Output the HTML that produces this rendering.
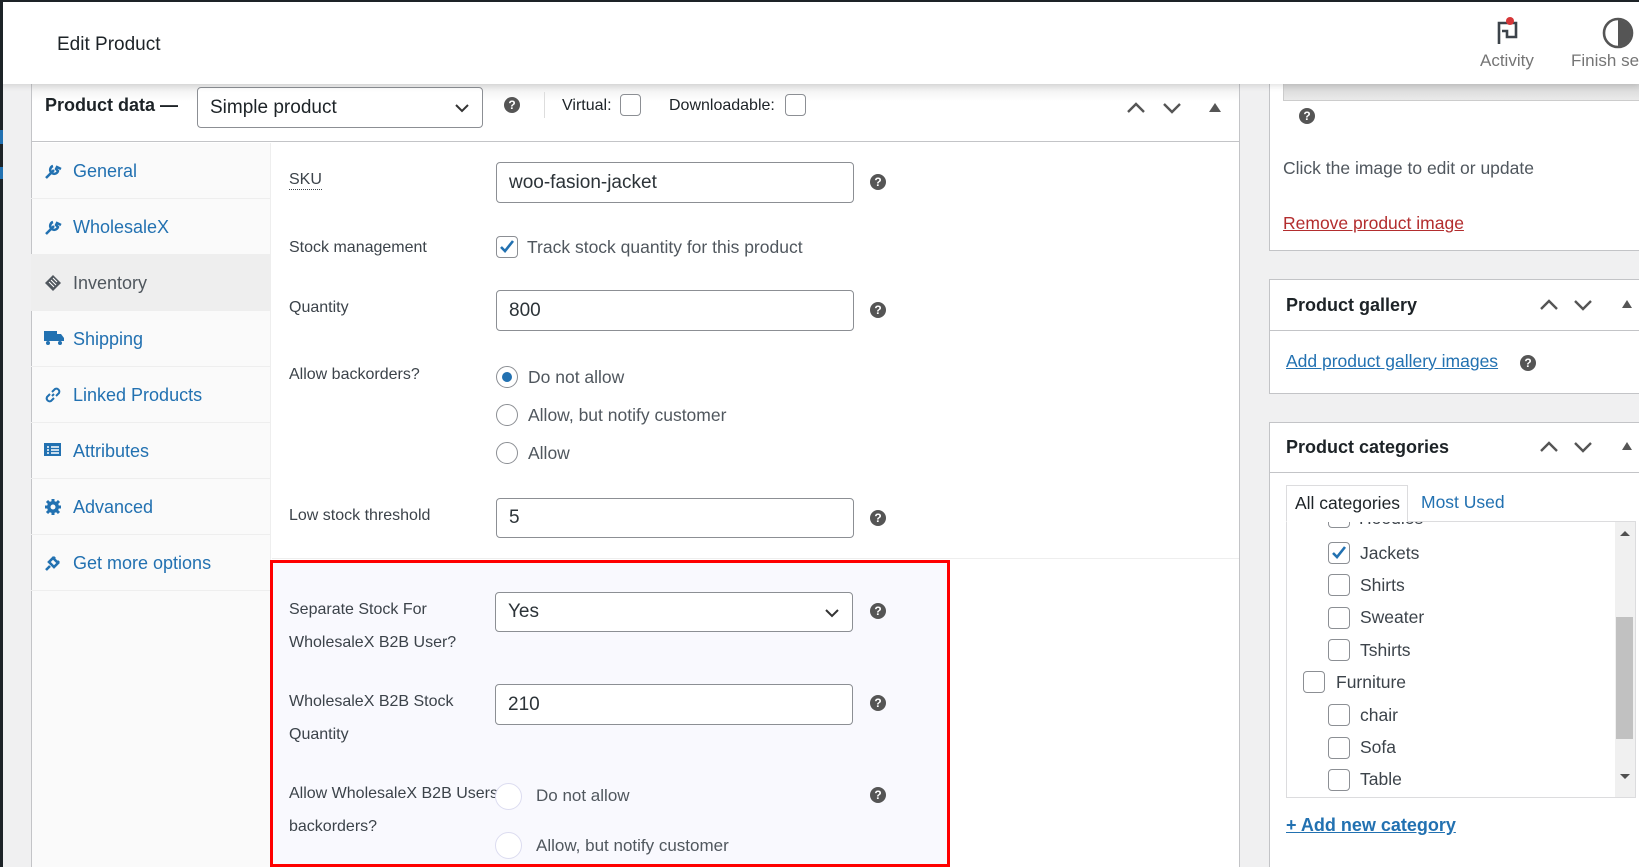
<!DOCTYPE html>
<html><head><meta charset="utf-8"><style>
*{box-sizing:border-box;margin:0;padding:0}
html{width:1639px;height:867px;overflow:hidden}
body{width:1639px;height:867px;overflow:hidden;background:#f0f0f1;font-family:"Liberation Sans",sans-serif;position:relative;color:#3c434a}
.a{position:absolute;white-space:nowrap}
.lbl{font-size:16px;color:#3c434a;line-height:20px}
.inp{position:absolute;background:#fff;border:1px solid #8c8f94;border-radius:4px;font-size:19px;color:#2c3338;padding-left:12px;display:flex;align-items:center}
.q{position:absolute;width:16px;height:16px;border-radius:50%;background:#555;color:#fff;font-size:12px;font-weight:bold;text-align:center;line-height:16px}
.tab{position:absolute;left:31px;width:240px;height:56px;border-bottom:1px solid #eee;font-size:18px;color:#2271b1;line-height:56px;padding-left:42px}
.tab svg{position:absolute;left:13px;top:19px}
.cb{position:absolute;width:22px;height:22px;border:1px solid #8c8f94;border-radius:4px;background:#fff}
.rd{position:absolute;width:22px;height:22px;border:1px solid #8c8f94;border-radius:50%;background:#fff}
.box{position:absolute;background:#fff;border:1px solid #c3c4c7}
.h2{font-size:18px;font-weight:bold;color:#1d2327}
.link{color:#2271b1;text-decoration:underline}
.cat{position:absolute;font-size:17.5px;color:#3c434a}
</style></head><body>
<!-- top bar -->
<div class="a" style="left:0;top:0;width:1639px;height:84px;background:#fff;border-top:2px solid #1d2327;box-shadow:0 2px 6px rgba(0,0,0,.12);z-index:5">
<div class="a" style="left:57px;top:32px;font-size:19px;color:#1d2327">Edit Product</div>
<svg class="a" style="left:1494px;top:12px" width="30" height="32" viewBox="0 0 30 32"><path d="M5 30V9h17v14h-9v-6H8" fill="none" stroke="#3c434a" stroke-width="2.6"/><circle cx="16" cy="7" r="4" fill="#d63638"/></svg>
<div class="a" style="left:1480px;top:49px;font-size:17px;color:#757575">Activity</div>
<svg class="a" style="left:1601px;top:14px" width="34" height="34" viewBox="0 0 34 34"><circle cx="17" cy="17" r="14" fill="none" stroke="#555" stroke-width="2.6"/><path d="M17 4a13 13 0 0 1 0 26z" fill="#555"/></svg>
<div class="a" style="left:1571px;top:49px;font-size:17px;color:#757575">Finish setup</div>
</div>
<div class="a" style="left:0;top:0;width:3px;height:867px;background:#1d2327;z-index:6"></div>
<div class="a" style="left:0;top:130px;width:3px;height:14px;background:#2271b1;z-index:7"></div>
<div class="a" style="left:0;top:167px;width:3px;height:12px;background:#2271b1;z-index:7"></div>

<!-- product data panel -->
<div class="a" style="left:31px;top:84px;width:1209px;height:783px;background:#fff;border-left:1px solid #c3c4c7;border-right:1px solid #c3c4c7"></div>
<div class="a" style="left:32px;top:84px;width:1207px;height:58px;background:linear-gradient(#ececec,#fff 30%);border-bottom:1px solid #c3c4c7"></div>
<div class="a h2" style="left:45px;top:95px">Product data —</div>
<div class="inp" style="left:197px;top:87px;width:286px;height:41px;font-weight:500;font-size:19px;color:#1d2327">Simple product
<svg style="position:absolute;right:12px;top:14px" width="16" height="12" viewBox="0 0 16 12"><path d="M2 3l6 6 6-6" fill="none" stroke="#333" stroke-width="2"/></svg></div>
<div class="q" style="left:504px;top:97px">?</div>
<div class="a" style="left:544px;top:92px;width:1px;height:26px;background:#ddd"></div>
<div class="a lbl" style="left:562px;top:96px;color:#1d2327">Virtual:</div>
<div class="cb" style="left:620px;top:94px;width:21px"></div>
<div class="a lbl" style="left:669px;top:96px;color:#1d2327">Downloadable:</div>
<div class="cb" style="left:785px;top:94px;width:21px"></div>
<svg class="a" style="left:1126px;top:100px" width="120" height="16" viewBox="0 0 120 16"><path d="M2 12l8-8 8 8M38 4l8 8 8-8" fill="none" stroke="#555" stroke-width="2.4"/><path d="M83 12l6-9 6 9z" fill="#555"/></svg>

<!-- sidebar -->
<div class="a" style="left:32px;top:143px;width:239px;height:724px;background:#fafafa;border-right:1px solid #eee"></div>
<div class="tab" style="top:143px">General<svg width="18" height="18" viewBox="0 0 18 18"><path d="M2 16l8-8M9 4a4 4 0 1 0 5 5l-2-2 1-2 2 1 2 1" fill="none" stroke="#2271b1" stroke-width="2.5"/></svg></div>
<div class="tab" style="top:199px">WholesaleX<svg width="18" height="18" viewBox="0 0 18 18"><path d="M2 16l8-8M9 4a4 4 0 1 0 5 5l-2-2 1-2 2 1 2 1" fill="none" stroke="#2271b1" stroke-width="2.5"/></svg></div>
<div class="tab" style="top:255px;background:#eee;color:#50575e">Inventory<svg width="18" height="18" viewBox="0 0 18 18"><path d="M9 1l8 8-8 8-8-8z" fill="#50575e"/><path d="M5 8l5 5M7 6l5 5M9 4l4 4" stroke="#fff" stroke-width="1"/></svg></div>
<div class="tab" style="top:311px">Shipping<svg width="20" height="16" viewBox="0 0 20 16"><path d="M0 1h13v10H0zM13 4h4l3 4v3h-7z" fill="#2271b1"/><circle cx="4" cy="13" r="2" fill="#2271b1"/><circle cx="16" cy="13" r="2" fill="#2271b1"/></svg></div>
<div class="tab" style="top:367px">Linked Products<svg width="18" height="18" viewBox="0 0 18 18"><path d="M8 10l2-2M6 8L3 11a3 3 0 0 0 4 4l3-3M12 10l3-3a3 3 0 0 0-4-4L8 6" fill="none" stroke="#2271b1" stroke-width="2"/></svg></div>
<div class="tab" style="top:423px">Attributes<svg width="18" height="16" viewBox="0 0 18 16"><rect x="0" y="1" width="17" height="13" fill="#2271b1"/><path d="M3 5h2M7 5h8M3 8h2M7 8h8M3 11h2M7 11h8" stroke="#fff" stroke-width="1.5"/></svg></div>
<div class="tab" style="top:479px">Advanced<svg width="18" height="18" viewBox="0 0 18 18"><circle cx="9" cy="9" r="6" fill="#2271b1"/><path d="M9 1v16M1 9h16M3 3l12 12M15 3L3 15" stroke="#2271b1" stroke-width="3"/><circle cx="9" cy="9" r="2.5" fill="#fafafa"/></svg></div>
<div class="tab" style="top:535px">Get more options<svg width="18" height="18" viewBox="0 0 18 18"><path d="M2 16l4-4M5 8l5 5 4-4-5-5zM11 3l-2 2M15 7l-2 2" fill="none" stroke="#2271b1" stroke-width="2.6"/></svg></div>

<!-- content -->
<div class="a lbl" style="left:289px;top:171px;border-bottom:1px dotted #3c434a;line-height:18px">SKU</div>
<div class="inp" style="left:496px;top:162px;width:358px;height:41px">woo-fasion-jacket</div>
<div class="q" style="left:870px;top:174px">?</div>
<div class="a lbl" style="left:289px;top:238px">Stock management</div>
<div class="cb" style="left:496px;top:236px"><svg width="20" height="20" viewBox="0 0 20 20"><path d="M4 10l4 4 8-10" fill="none" stroke="#2271b1" stroke-width="2.6"/></svg></div>
<div class="a" style="left:527px;top:237px;font-size:17.5px;color:#50575e">Track stock quantity for this product</div>
<div class="a lbl" style="left:289px;top:298px">Quantity</div>
<div class="inp" style="left:496px;top:290px;width:358px;height:41px">800</div>
<div class="q" style="left:870px;top:302px">?</div>
<div class="a lbl" style="left:289px;top:365px">Allow backorders?</div>
<div class="rd" style="left:496px;top:366px;border-color:#8c8f94"><div style="width:10px;height:10px;border-radius:50%;background:#2271b1;margin:5px"></div></div>
<div class="a" style="left:528px;top:367px;font-size:17.5px;color:#50575e">Do not allow</div>
<div class="rd" style="left:496px;top:404px"></div>
<div class="a" style="left:528px;top:405px;font-size:17.5px;color:#50575e">Allow, but notify customer</div>
<div class="rd" style="left:496px;top:442px"></div>
<div class="a" style="left:528px;top:443px;font-size:17.5px;color:#50575e">Allow</div>
<div class="a lbl" style="left:289px;top:506px">Low stock threshold</div>
<div class="inp" style="left:496px;top:498px;width:358px;height:40px">5</div>
<div class="q" style="left:870px;top:510px">?</div>
<div class="a" style="left:272px;top:558px;width:967px;height:1px;background:#eee"></div>

<!-- red box -->
<div class="a" style="left:270px;top:560px;width:680px;height:307px;border:3px solid #ff0000;background:#f9f9fe"></div>
<div class="a lbl" style="left:289px;top:593px;line-height:33px">Separate Stock For<br>WholesaleX B2B User?</div>
<div class="inp" style="left:495px;top:592px;width:358px;height:40px">Yes<svg style="position:absolute;right:12px;top:14px" width="16" height="12" viewBox="0 0 16 12"><path d="M2 3l6 6 6-6" fill="none" stroke="#333" stroke-width="2"/></svg></div>
<div class="q" style="left:870px;top:603px">?</div>
<div class="a lbl" style="left:289px;top:685px;line-height:33px">WholesaleX B2B Stock<br>Quantity</div>
<div class="inp" style="left:495px;top:684px;width:358px;height:41px">210</div>
<div class="q" style="left:870px;top:695px">?</div>
<div class="a lbl" style="left:289px;top:777px;line-height:33px">Allow WholesaleX B2B Users<br>backorders?</div>
<div class="rd" style="left:495px;top:783px;width:27px;height:27px;border-color:#dcdcf0"></div>
<div class="a" style="left:536px;top:786px;font-size:17px;color:#50575e">Do not allow</div>
<div class="rd" style="left:495px;top:832px;width:27px;height:27px;border-color:#dcdcf0"></div>
<div class="a" style="left:536px;top:836px;font-size:17px;color:#50575e">Allow, but notify customer</div>
<div class="q" style="left:870px;top:787px">?</div>

<!-- right column -->
<div class="box" style="left:1269px;top:70px;width:380px;height:181px"></div>
<div class="a" style="left:1283px;top:84px;width:360px;height:17px;background:linear-gradient(#d4d4d4,#eaeaea);border:1px solid #ccc;border-top:none"></div>
<div class="q" style="left:1299px;top:108px">?</div>
<div class="a" style="left:1283px;top:158px;font-size:17.5px;color:#50575e">Click the image to edit or update</div>
<div class="a" style="left:1283px;top:213px;font-size:17.5px;color:#b32d2e;text-decoration:underline">Remove product image</div>

<div class="box" style="left:1269px;top:279px;width:380px;height:115px"></div>
<div class="a" style="left:1270px;top:330px;width:370px;height:1px;background:#c3c4c7"></div>
<div class="a h2" style="left:1286px;top:295px">Product gallery</div>
<svg class="a" style="left:1539px;top:297px" width="100" height="16" viewBox="0 0 100 16"><path d="M2 12l8-8 8 8M36 4l8 8 8-8" fill="none" stroke="#555" stroke-width="2.4"/><path d="M83 11l5-8 5 8z" fill="#555"/></svg>
<div class="a link" style="left:1286px;top:351px;font-size:17.5px">Add product gallery images</div>
<div class="q" style="left:1520px;top:355px">?</div>

<div class="box" style="left:1269px;top:422px;width:380px;height:460px"></div>
<div class="a" style="left:1270px;top:472px;width:370px;height:1px;background:#c3c4c7"></div>
<div class="a h2" style="left:1286px;top:437px">Product categories</div>
<svg class="a" style="left:1539px;top:439px" width="100" height="16" viewBox="0 0 100 16"><path d="M2 12l8-8 8 8M36 4l8 8 8-8" fill="none" stroke="#555" stroke-width="2.4"/><path d="M83 11l5-8 5 8z" fill="#555"/></svg>
<div class="a" style="left:1286px;top:521px;width:350px;height:277px;border:1px solid #dcdcde;background:#fff;overflow:hidden">
 <div class="a" style="right:0;top:0;width:20px;height:275px;background:#f0f0f0"></div>
 <div class="a" style="right:2px;top:95px;width:17px;height:122px;background:#c1c1c1"></div>
 <svg class="a" style="right:4px;top:8px" width="12" height="250" viewBox="0 0 12 250"><path d="M1 6l5-5 5 5z M1 244l5 5 5-5z" fill="#505050"/></svg>
 <div class="cb" style="left:41px;top:-16px"></div><div class="cat" style="left:72px;top:-14px">Hoodies</div>
</div>
<div class="a" style="left:1286px;top:485px;width:122px;height:37px;border:1px solid #dcdcde;border-bottom:1px solid #fff;background:#fff;font-size:17.5px;color:#1d2327;padding:7px 0 0 8px">All categories</div>
<div class="a" style="left:1421px;top:492px;font-size:17.5px;color:#2271b1">Most Used</div>
<div class="cb" style="left:1328px;top:542px"><svg width="20" height="20" viewBox="0 0 20 20"><path d="M4 10l4 4 8-10" fill="none" stroke="#2271b1" stroke-width="2.6"/></svg></div><div class="cat" style="left:1360px;top:543px">Jackets</div>
<div class="cb" style="left:1328px;top:574px"></div><div class="cat" style="left:1360px;top:575px">Shirts</div>
<div class="cb" style="left:1328px;top:607px"></div><div class="cat" style="left:1360px;top:607px">Sweater</div>
<div class="cb" style="left:1328px;top:639px"></div><div class="cat" style="left:1360px;top:640px">Tshirts</div>
<div class="cb" style="left:1303px;top:671px"></div><div class="cat" style="left:1336px;top:672px">Furniture</div>
<div class="cb" style="left:1328px;top:704px"></div><div class="cat" style="left:1360px;top:705px">chair</div>
<div class="cb" style="left:1328px;top:737px"></div><div class="cat" style="left:1360px;top:737px">Sofa</div>
<div class="cb" style="left:1328px;top:769px"></div><div class="cat" style="left:1360px;top:769px">Table</div>
<div class="a link" style="left:1286px;top:815px;font-size:18px;font-weight:bold">+ Add new category</div>
</body></html>
